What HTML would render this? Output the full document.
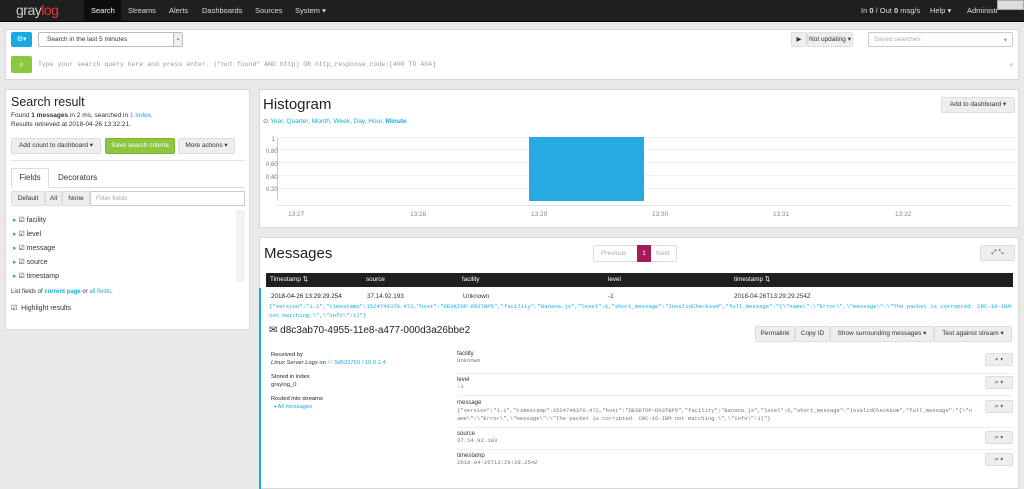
<!DOCTYPE html>
<html><head><meta charset="utf-8"><style>
*{box-sizing:border-box;margin:0;padding:0}
body{width:1024px;height:489px;overflow:hidden;background:#e9e9e9;font-family:"Liberation Sans",sans-serif;font-size:7px;color:#333;position:relative}
.a{position:absolute;white-space:nowrap}
.wrap{white-space:normal}
.nav{left:0;top:0;width:1024px;height:22px;background:#1f1f1f;border-bottom:1px solid #000}
.nav span{position:absolute;top:6px;color:#ddd;font-size:7.5px}
.panel{background:#fff;border:1px solid #d8d8d8}
.btn{position:absolute;white-space:nowrap;background:#eee;border:1px solid #ddd;font-size:6.5px;color:#333;text-align:center;border-radius:2px}
.blue{color:#16ace3}
.mono{font-family:"Liberation Mono",monospace}
.hl{position:absolute;left:278px;width:742px;height:1px;background:#f0f0f0}
</style></head><body>
<div class="a nav">
 <div class="a" style="left:84px;top:0;width:37px;height:22px;background:#0d0d0d"></div>
 <span style="left:16px;top:2px;font-size:14px;color:#ccc;letter-spacing:-0.5px">gray<span style="position:static;color:#e03a3a;font-size:14px">log</span></span>
 <span style="left:91px;color:#fff">Search</span>
 <span style="left:128px">Streams</span>
 <span style="left:169px">Alerts</span>
 <span style="left:202px">Dashboards</span>
 <span style="left:255px">Sources</span>
 <span style="left:295px">System ▾</span>
 <span style="left:861px">In <b>0</b> / Out <b>0</b> msg/s</span>
 <span style="left:930px">Help ▾</span>
 <span style="left:967px">Administr</span>
 <div class="a" style="left:997px;top:0;width:27px;height:10px;background:#ddd;border:1px solid #aaa"></div>
</div>
<div class="a panel" style="left:5px;top:29px;width:1014px;height:51px"></div>
<div class="a" style="left:11px;top:32px;width:21px;height:15px;background:#16ace3;border-radius:2px;color:#fff;font-size:7px;text-align:center;line-height:15px">⚙▾</div>
<div class="a" style="left:38px;top:32px;width:145px;height:15px;border:1px solid #bbb;border-radius:2px;padding:3px 8px;font-size:6.5px">Search in the last 5 minutes<span style="position:absolute;right:0;top:0;width:9px;height:13px;background:#eee;border-left:1px solid #bbb;text-align:center;font-size:6px;line-height:13px">⌄</span></div>
<div class="btn" style="left:791px;top:32px;width:16px;height:15px;line-height:13px">▶</div>
<div class="btn" style="left:807px;top:32px;width:46px;height:15px;line-height:13px">Not updating ▾</div>
<div class="a" style="left:868px;top:32px;width:145px;height:15px;border:1px solid #ccc;border-radius:2px;padding:3px 5px;color:#aaa;font-size:6.5px">Saved searches<span style="position:absolute;right:5px;color:#999">▾</span></div>
<div class="a" style="left:11px;top:56px;width:21px;height:17px;background:#8dc63f;border-radius:2px;color:#fff;text-align:center;line-height:17px;font-size:8px">⌕</div>
<div class="a mono" style="left:38px;top:61px;color:#999;font-size:6.5px">Type your search query here and press enter. ("not found" AND http) OR http_response_code:[400 TO 404]</div>
<div class="a blue" style="left:1009px;top:62px;font-size:7px">♀</div>

<div class="a panel" style="left:5px;top:89px;width:245px;height:241px"></div>
<div class="a" style="left:11px;top:95px;font-size:12.5px;color:#222">Search result</div>
<div class="a" style="left:11px;top:111px;font-size:6.5px;line-height:9px">Found <b>1 messages</b> in 2 ms, searched in <span class="blue">1 index</span>.<br>Results retrieved at 2018-04-26 13:32:21.</div>
<div class="btn" style="left:11px;top:138px;width:90px;height:16px;line-height:14px">Add count to dashboard ▾</div>
<div class="btn" style="left:105px;top:138px;width:70px;height:16px;line-height:14px;background:#8dc63f;border-color:#7db52f;color:#fff">Save search criteria</div>
<div class="btn" style="left:178px;top:138px;width:57px;height:16px;line-height:14px">More actions ▾</div>
<div class="a" style="left:11px;top:160px;width:234px;height:1px;background:#e5e5e5"></div>
<div class="a" style="left:11px;top:187px;width:234px;height:1px;background:#ddd"></div>
<div class="a" style="left:11px;top:168px;width:38px;height:20px;background:#fff;border:1px solid #ddd;border-bottom:none;font-size:8px;text-align:center;line-height:18px">Fields</div>
<div class="a" style="left:58px;top:173px;font-size:8px">Decorators</div>
<div class="btn" style="left:11px;top:191px;width:34px;height:15px;line-height:13px">Default</div>
<div class="btn" style="left:45px;top:191px;width:17px;height:15px;line-height:13px">All</div>
<div class="btn" style="left:62px;top:191px;width:28px;height:15px;line-height:13px">None</div>
<div class="a" style="left:90px;top:191px;width:155px;height:15px;border:1px solid #ccc;padding:3px 5px;color:#aaa;font-size:6.5px">Filter fields</div>
<div class="a" style="left:236px;top:210px;width:9px;height:72px;background:#f2f2f2"></div>
<div class="a" style="left:13px;top:214px;line-height:14px;font-size:7px">
<div><span class="blue">▸</span> ☑ facility</div><div><span class="blue">▸</span> ☑ level</div><div><span class="blue">▸</span> ☑ message</div><div><span class="blue">▸</span> ☑ source</div><div><span class="blue">▸</span> ☑ timestamp</div></div>
<div class="a" style="left:11px;top:289px;font-size:6px">List fields of <b class="blue">current page</b> or <span class="blue">all fields</span>.</div>
<div class="a" style="left:11px;top:304px;font-size:7px">☑ &nbsp;Highlight results</div>

<div class="a panel" style="left:259px;top:89px;width:760px;height:139px"></div>
<div class="a" style="left:263px;top:96px;font-size:15px;color:#222">Histogram</div>
<div class="btn" style="left:941px;top:97px;width:74px;height:16px;line-height:14px">Add to dashboard ▾</div>
<div class="a" style="left:263px;top:117px;font-size:6.5px"><span style="color:#555">⊙</span> <span class="blue">Year, Quarter, Month, Week, Day, Hour, <b>Minute</b></span></div>
<div class="a" style="left:277px;top:137px;width:1px;height:64px;background:#ccc"></div>
<div class="hl" style="top:137px"></div><div class="hl" style="top:149px"></div><div class="hl" style="top:162px"></div><div class="hl" style="top:175px"></div><div class="hl" style="top:188px"></div>
<div class="a" style="left:277px;top:205px;width:734px;height:1px;background:#e3e3e3"></div>
<div class="a" style="left:264px;top:134px;font-size:6px;color:#777;line-height:12.8px;text-align:right;width:11px"><div>1</div></div>
<div class="a" style="left:266px;top:146px;font-size:6px;color:#777;line-height:12.8px;text-align:right">0.80<br>0.60<br>0.40<br>0.20</div>
<div class="a" style="left:529px;top:137px;width:115px;height:64px;background:#27aae1"></div>
<div class="a" style="top:211px;left:0;font-size:6.5px;color:#888">
<span class="a" style="left:288px">13:27</span><span class="a" style="left:410px">13:28</span><span class="a" style="left:531px">13:29</span><span class="a" style="left:652px">13:30</span><span class="a" style="left:773px">13:31</span><span class="a" style="left:895px">13:32</span></div>

<div class="a panel" style="left:259px;top:237px;width:760px;height:252px"></div>
<div class="a" style="left:264px;top:245px;font-size:15px;color:#222">Messages</div>
<div class="a" style="left:593px;top:245px;width:84px;height:17px;border:1px solid #ddd;border-radius:2px;font-size:6.5px;color:#aaa"><span class="a" style="left:7px;top:4px">Previous</span><span class="a" style="left:43px;top:-1px;width:14px;height:17px;background:#a6195a;color:#fff;text-align:center;line-height:17px">1</span><span class="a" style="left:62px;top:4px">Next</span></div>
<div class="btn" style="left:980px;top:245px;width:35px;height:16px;line-height:14px">⤢ ⤡</div>
<div class="a" style="left:266px;top:273px;width:747px;height:14px;background:#1f1f1f;color:#fff;font-size:6.3px">
<span class="a" style="left:4px;top:3px">Timestamp ⇅</span><span class="a" style="left:100px;top:3px">source</span><span class="a" style="left:196px;top:3px">facility</span><span class="a" style="left:342px;top:3px">level</span><span class="a" style="left:468px;top:3px">timestamp ⇅</span></div>
<div class="a" style="left:259px;top:288px;width:2px;height:201px;background:#16ace3"></div>
<div class="a" style="top:293px;left:0;font-size:6.3px">
<span class="a" style="left:271px;color:#222">2018-04-26 13:29:29.254</span><span class="a" style="left:367px">37.14.92.193</span><span class="a" style="left:463px">Unknown</span><span class="a" style="left:608px">-1</span><span class="a" style="left:734px">2018-04-26T13:29:29.254Z</span></div>
<div class="a mono blue wrap" style="left:269px;top:302px;width:748px;font-size:5.6px;line-height:9px;word-break:break-all">{"version":"1.1","timestamp":1524749370.472,"host":"DESKTOP-DO3TBP5","facility":"Banana.js","level":6,"short_message":"InvalidChecksum","full_message":"{\"name\":\"Error\",\"message\":\"The packet is corrupted. CRC-16-IBM not matching.\",\"info\":1}"}</div>
<div class="a" style="left:269px;top:325px;font-size:10px;color:#222">✉ d8c3ab70-4955-11e8-a477-000d3a26bbe2</div>
<div class="btn" style="left:755px;top:326px;width:40px;height:16px;line-height:14px">Permalink</div>
<div class="btn" style="left:795px;top:326px;width:35px;height:16px;line-height:14px">Copy ID</div>
<div class="btn" style="left:830px;top:326px;width:104px;height:16px;line-height:14px">Show surrounding messages ▾</div>
<div class="btn" style="left:934px;top:326px;width:78px;height:16px;line-height:14px">Test against stream ▾</div>
<div class="a" style="left:271px;top:351px;font-size:5.8px;line-height:8px">
<span style="color:#222">Received by</span><br><i>Linux Server Logs</i> on <span class="blue">⚐ 5d533769 / 10.0.1.4</span>
<div style="height:6px"></div><span style="color:#222">Stored in index</span><br>graylog_0
<div style="height:6px"></div><span style="color:#222">Routed into streams</span><br>&nbsp;&nbsp;• <span class="blue">All messages</span></div>
<div class="a" style="left:457px;top:351px;width:556px;font-size:6px">
<div style="height:23px;border-bottom:1px solid #eee">facility<br><span class="mono" style="color:#777;font-size:5.6px">Unknown</span></div>
<div style="height:22px;border-bottom:1px solid #eee;padding-top:3px">level<br><span class="mono" style="color:#777;font-size:5.6px">-1</span></div>
<div style="height:32px;border-bottom:1px solid #eee;padding-top:3px;line-height:8px">message<br><span class="mono" style="color:#777;font-size:5.5px;word-break:break-all;white-space:normal;display:block;width:515px">{"version":"1.1","timestamp":1524749370.472,"host":"DESKTOP-DO3TBP5","facility":"Banana.js","level":6,"short_message":"InvalidChecksum","full_message":"{\"name\":\"Error\",\"message\":\"The packet is corrupted. CRC-16-IBM not matching.\",\"info\":1}"}</span></div>
<div style="height:22px;border-bottom:1px solid #eee;padding-top:3px">source<br><span class="mono" style="color:#777;font-size:5.6px">37.14.92.193</span></div>
<div style="height:22px;padding-top:3px">timestamp<br><span class="mono" style="color:#777;font-size:5.6px">2018-04-26T13:29:29.254Z</span></div></div>
<div class="btn" style="left:985px;top:353px;width:28px;height:13px;line-height:11px">⌕ ▾</div>
<div class="btn" style="left:985px;top:376px;width:28px;height:13px;line-height:11px">⌕ ▾</div>
<div class="btn" style="left:985px;top:400px;width:28px;height:13px;line-height:11px">⌕ ▾</div>
<div class="btn" style="left:985px;top:431px;width:28px;height:13px;line-height:11px">⌕ ▾</div>
<div class="btn" style="left:985px;top:453px;width:28px;height:13px;line-height:11px">⌕ ▾</div>
</body></html>
